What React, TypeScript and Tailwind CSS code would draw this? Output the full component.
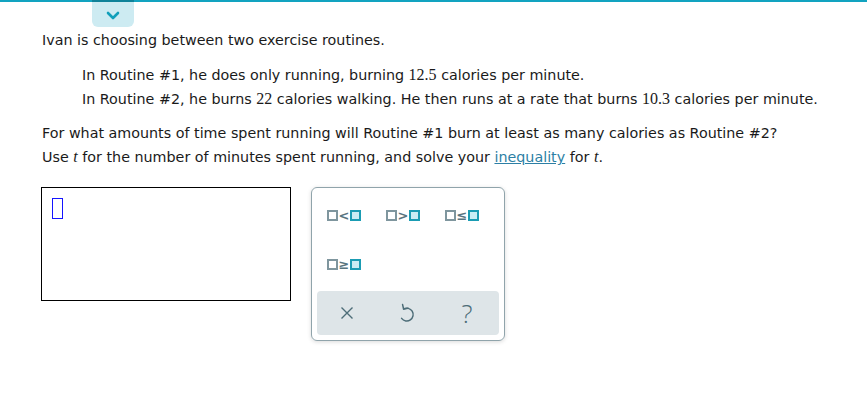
import React from "react";

const Num = ({ children }: { children: React.ReactNode }) => (
  <span className="text-[16px]" style={{ fontFamily: '"Liberation Serif", serif' }}>
    {children}
  </span>
);

const T = () => (
  <span className="italic text-[16px]" style={{ fontFamily: '"Liberation Serif", serif' }}>
    t
  </span>
);

const GrayBox = () => (
  <span className="inline-block w-[11px] h-[11px] border-[2px] border-[#7f969e] bg-white" />
);
const TealBox = () => (
  <span className="inline-block w-[11px] h-[11px] border-[2px] border-[#1a9cb3] bg-[#c9edf4]" />
);

const Sym = ({ op }: { op: string }) => (
  <div className="flex items-center gap-[1px] w-[34px] h-[14px]">
    <GrayBox />
    <span className="text-[13px] leading-none text-[#587480] font-bold" style={{ fontFamily: '"DejaVu Sans", sans-serif' }}>
      {op}
    </span>
    <TealBox />
  </div>
);

export default function App() {
  return (
    <div className="w-[867px] h-[400px] bg-white relative" style={{ fontFamily: '"DejaVu Sans", Verdana, sans-serif' }}>
      <div className="h-[2px] bg-[#12a3c0] w-full" />
      <div className="absolute left-[92px] top-0 w-[42px] h-[27px] bg-[#cdebf2] rounded-b-[6px] flex items-center justify-center">
        <div className="absolute top-0 left-0 right-0 h-[2px] bg-[#0f8299]" />
        <svg width="14" height="10" viewBox="0 0 14 10" className="mt-[4px]">
          <path d="M2 2 L7 7 L12 2" fill="none" stroke="#119fba" strokeWidth="2.6" strokeLinecap="round" strokeLinejoin="round" />
        </svg>
      </div>
      <div className="pl-[42px] pt-[28px] text-[14.3px] text-[#1a1a1a]">
        <div className="leading-[20px]">Ivan is choosing between two exercise routines.</div>
        <div className="pl-[40px] mt-[13px] leading-[24px]">
          <div>
            In Routine #1, he does only running, burning <Num>12.5</Num> calories per minute.
          </div>
          <div>
            In Routine #2, he burns <Num>22</Num> calories walking. He then runs at a rate that burns <Num>10.3</Num> calories per minute.
          </div>
        </div>
        <div className="mt-[11px] leading-[23px]">
          <div>For what amounts of time spent running will Routine #1 burn at least as many calories as Routine #2?</div>
          <div>
            Use <T /> for the number of minutes spent running, and solve your{" "}
            <span className="text-[#2d7fa5] underline">inequality</span> for <T />.
          </div>
        </div>
        <div className="flex mt-[18px] gap-[20px] -ml-[1px]">
          <div className="w-[250px] h-[114px] border-[1.5px] border-black pl-[10px] pt-[10px]">
            <div className="w-[11px] h-[21px] border-[1px] border-[#1515ff]" />
          </div>
          <div className="w-[194px] h-[154px] border border-[#90a4ab] rounded-[6px] shadow-[0_1px_4px_rgba(0,0,0,0.15)] flex flex-col px-[5px] pb-[5px]">
            <div className="flex flex-col gap-[35px] pt-[20px] pl-[10px] h-[103px]">
              <div className="flex gap-[25px]">
                <Sym op="<" />
                <Sym op=">" />
                <Sym op="≤" />
              </div>
              <div className="flex">
                <Sym op="≥" />
              </div>
            </div>
            <div className="bg-[#dee5e8] rounded-[4px] h-[44px] grid grid-cols-[60px_60px_60px] items-center justify-items-center text-[#4d6d78]">
              <svg width="14" height="14" viewBox="0 0 14 14">
                <path d="M1.5 1.5 L12.5 12.5 M12.5 1.5 L1.5 12.5" stroke="#4d6d78" strokeWidth="1.4" />
              </svg>
              <svg width="18" height="20" viewBox="0 0 18 20">
                <path d="M5.6 6 A6.4 6.4 0 1 1 3.6 15.4" fill="none" stroke="#4d6d78" strokeWidth="1.5" strokeLinecap="round" />
                <path d="M4.6 1.6 L5.6 6 L10 5.2" fill="none" stroke="#4d6d78" strokeWidth="1.5" strokeLinecap="round" strokeLinejoin="round" />
              </svg>
              <span className="text-[26px] leading-none font-light" style={{ fontFamily: '"Open Sans", sans-serif' }}>?</span>
            </div>
          </div>
        </div>
      </div>
    </div>
  );
}
